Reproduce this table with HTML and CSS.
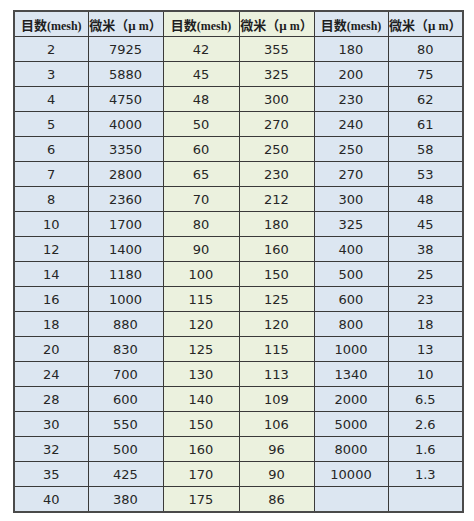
FILE: index.html
```html
<!DOCTYPE html>
<html>
<head>
<meta charset="utf-8">
<link rel="stylesheet" href="styles.css">
</head>
<body>
<table class="mesh">
  <colgroup>
    <col class="c1"><col class="c2"><col class="c3"><col class="c4"><col class="c5"><col class="c6">
  </colgroup>
  <thead>
    <tr>
      <th class="blue">目数<span class="en">(mesh)</span></th>
      <th class="blue">微米（<span class="mu">μ</span><span class="en">m</span>）</th>
      <th class="green">目数<span class="en">(mesh)</span></th>
      <th class="green">微米（<span class="mu">μ</span><span class="en">m</span>）</th>
      <th class="blue">目数<span class="en">(mesh)</span></th>
      <th class="blue">微米（<span class="mu">μ</span><span class="en">m</span>）</th>
    </tr>
  </thead>
  <tbody>
    <tr><td class="blue">2</td><td class="blue">7925</td><td class="green">42</td><td class="green">355</td><td class="blue">180</td><td class="blue">80</td></tr>
    <tr><td class="blue">3</td><td class="blue">5880</td><td class="green">45</td><td class="green">325</td><td class="blue">200</td><td class="blue">75</td></tr>
    <tr><td class="blue">4</td><td class="blue">4750</td><td class="green">48</td><td class="green">300</td><td class="blue">230</td><td class="blue">62</td></tr>
    <tr><td class="blue">5</td><td class="blue">4000</td><td class="green">50</td><td class="green">270</td><td class="blue">240</td><td class="blue">61</td></tr>
    <tr><td class="blue">6</td><td class="blue">3350</td><td class="green">60</td><td class="green">250</td><td class="blue">250</td><td class="blue">58</td></tr>
    <tr><td class="blue">7</td><td class="blue">2800</td><td class="green">65</td><td class="green">230</td><td class="blue">270</td><td class="blue">53</td></tr>
    <tr><td class="blue">8</td><td class="blue">2360</td><td class="green">70</td><td class="green">212</td><td class="blue">300</td><td class="blue">48</td></tr>
    <tr><td class="blue">10</td><td class="blue">1700</td><td class="green">80</td><td class="green">180</td><td class="blue">325</td><td class="blue">45</td></tr>
    <tr><td class="blue">12</td><td class="blue">1400</td><td class="green">90</td><td class="green">160</td><td class="blue">400</td><td class="blue">38</td></tr>
    <tr><td class="blue">14</td><td class="blue">1180</td><td class="green">100</td><td class="green">150</td><td class="blue">500</td><td class="blue">25</td></tr>
    <tr><td class="blue">16</td><td class="blue">1000</td><td class="green">115</td><td class="green">125</td><td class="blue">600</td><td class="blue">23</td></tr>
    <tr><td class="blue">18</td><td class="blue">880</td><td class="green">120</td><td class="green">120</td><td class="blue">800</td><td class="blue">18</td></tr>
    <tr><td class="blue">20</td><td class="blue">830</td><td class="green">125</td><td class="green">115</td><td class="blue">1000</td><td class="blue">13</td></tr>
    <tr><td class="blue">24</td><td class="blue">700</td><td class="green">130</td><td class="green">113</td><td class="blue">1340</td><td class="blue">10</td></tr>
    <tr><td class="blue">28</td><td class="blue">600</td><td class="green">140</td><td class="green">109</td><td class="blue">2000</td><td class="blue">6.5</td></tr>
    <tr><td class="blue">30</td><td class="blue">550</td><td class="green">150</td><td class="green">106</td><td class="blue">5000</td><td class="blue">2.6</td></tr>
    <tr><td class="blue">32</td><td class="blue">500</td><td class="green">160</td><td class="green">96</td><td class="blue">8000</td><td class="blue">1.6</td></tr>
    <tr><td class="blue">35</td><td class="blue">425</td><td class="green">170</td><td class="green">90</td><td class="blue">10000</td><td class="blue">1.3</td></tr>
    <tr><td class="blue">40</td><td class="blue">380</td><td class="green">175</td><td class="green">86</td><td class="blue"></td><td class="blue"></td></tr>
  </tbody>
</table>
</body>
</html>
```

FILE: styles.css
```css
html, body {
  background: #ffffff;
}
body {
  margin: 10px 0 0 13px;
  font-family: "DejaVu Sans", Verdana, sans-serif;
  color: #262626;
}
.mesh {
  border-collapse: collapse;
  table-layout: fixed;
  width: 450px;
  border: 2px solid #4a4a4a;
}
.c1 { width: 74px; }
.c2 { width: 75px; }
.c3 { width: 76px; }
.c4 { width: 75px; }
.c5 { width: 74px; }
.c6 { width: 75px; }
.mesh th,
.mesh td {
  border: 1px solid #3a3a3a;
  height: 24px;
  padding: 0;
  text-align: center;
  vertical-align: middle;
  white-space: nowrap;
  overflow: hidden;
}
.mesh td {
  font-size: 13px;
}
.mesh th {
  font-family: "Noto Sans CJK SC", "DejaVu Sans", sans-serif;
  font-size: 13px;
  font-weight: bold;
  color: #1e1e1e;
}
.mesh th .en {
  font-family: "Liberation Serif", serif;
  font-size: 12px;
  font-weight: bold;
}
.mesh th .mu {
  font-family: "Liberation Serif", serif;
  font-size: 13px;
  font-weight: bold;
  margin-right: 3px;
}
.blue { background: #dce6f1; }
.green { background: #ebf1de; }
```
